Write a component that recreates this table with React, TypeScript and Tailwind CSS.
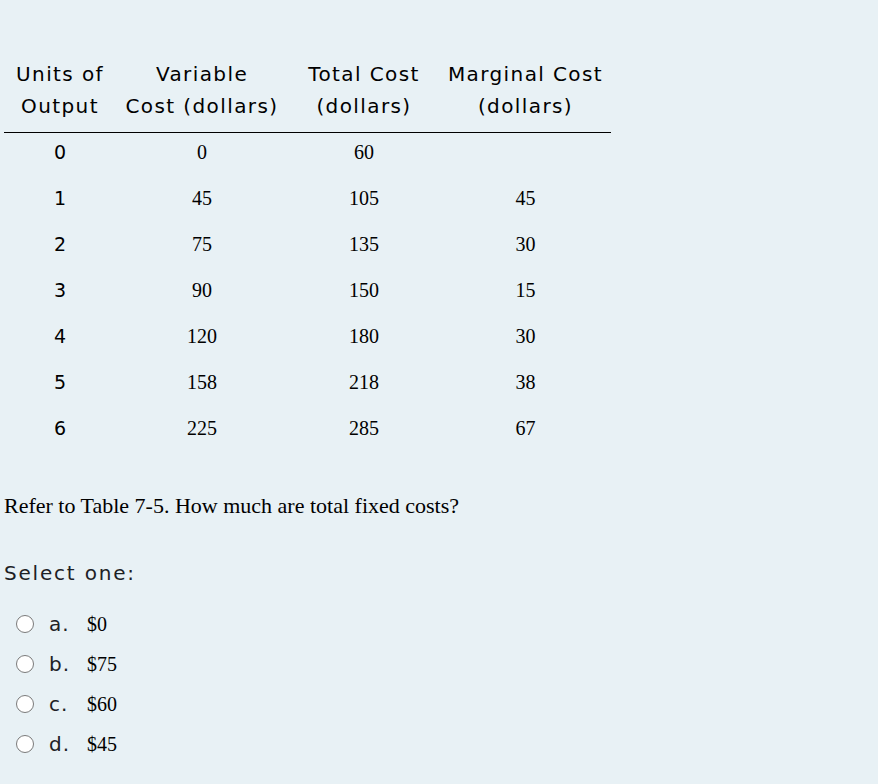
const rows = [
  { units: '0', variable: '0', total: '60', marginal: '' },
  { units: '1', variable: '45', total: '105', marginal: '45' },
  { units: '2', variable: '75', total: '135', marginal: '30' },
  { units: '3', variable: '90', total: '150', marginal: '15' },
  { units: '4', variable: '120', total: '180', marginal: '30' },
  { units: '5', variable: '158', total: '218', marginal: '38' },
  { units: '6', variable: '225', total: '285', marginal: '67' },
];

const options = [
  { letter: 'a.', value: '$0' },
  { letter: 'b.', value: '$75' },
  { letter: 'c.', value: '$60' },
  { letter: 'd.', value: '$45' },
];

const sans = "font-['DejaVu_Sans',sans-serif]";
const serif = "font-['Liberation_Serif',serif]";

export default function App() {
  return (
    <div className="min-h-[784px] w-[878px] bg-[#e8f1f5] pt-[58px] text-black">
      {/* 표 */}
      <table className="ml-1 w-[607px] border-collapse">
        <thead>
          <tr className={`${sans} text-[20px] leading-[32px] tracking-[1.4px]`}>
            <th className="w-[112px] border-b border-black pb-[10px] font-normal">
              Units of
              <br />
              Output
            </th>
            <th className="w-[172px] border-b border-black pb-[10px] font-normal">
              Variable
              <br />
              Cost (dollars)
            </th>
            <th className="w-[152px] border-b border-black pb-[10px] font-normal">
              Total Cost
              <br />
              (dollars)
            </th>
            <th className="border-b border-black pb-[10px] font-normal">
              Marginal Cost
              <br />
              (dollars)
            </th>
          </tr>
        </thead>
        <tbody>
          {rows.map((row) => (
            <tr key={row.units} className="h-[46px]">
              <td className={`${sans} pt-[7px] text-center align-top text-[19px] leading-[24px]`}>
                {row.units}
              </td>
              <td className={`${serif} pt-[7px] text-center align-top text-[20px] leading-[24px]`}>
                {row.variable}
              </td>
              <td className={`${serif} pt-[7px] text-center align-top text-[20px] leading-[24px]`}>
                {row.total}
              </td>
              <td className={`${serif} pt-[7px] text-center align-top text-[20px] leading-[24px]`}>
                {row.marginal}
              </td>
            </tr>
          ))}
        </tbody>
      </table>

      {/* 질문 */}
      <p className={`${serif} mt-[36px] pl-1 text-[22px] leading-[30px]`}>
        Refer to Table 7-5. How much are total fixed costs?
      </p>

      <div className={`${sans} mt-[37px] pl-1 text-[20px] leading-[30px] tracking-[1.8px] text-[#1d2125]`}>
        Select one:
      </div>

      <div className="mt-[16px] flex flex-col">
        {options.map((opt) => (
          <label key={opt.letter} className="flex h-[40px] items-center pl-[16px]">
            <span className="h-[18px] w-[18px] rounded-full border border-[#7a7a7a] bg-white" />
            <span className={`${sans} ml-[15px] w-[38px] text-[20px] tracking-[1px] text-[#1d2125]`}>
              {opt.letter}
            </span>
            <span className={`${serif} text-[20px]`}>{opt.value}</span>
          </label>
        ))}
      </div>
    </div>
  );
}
